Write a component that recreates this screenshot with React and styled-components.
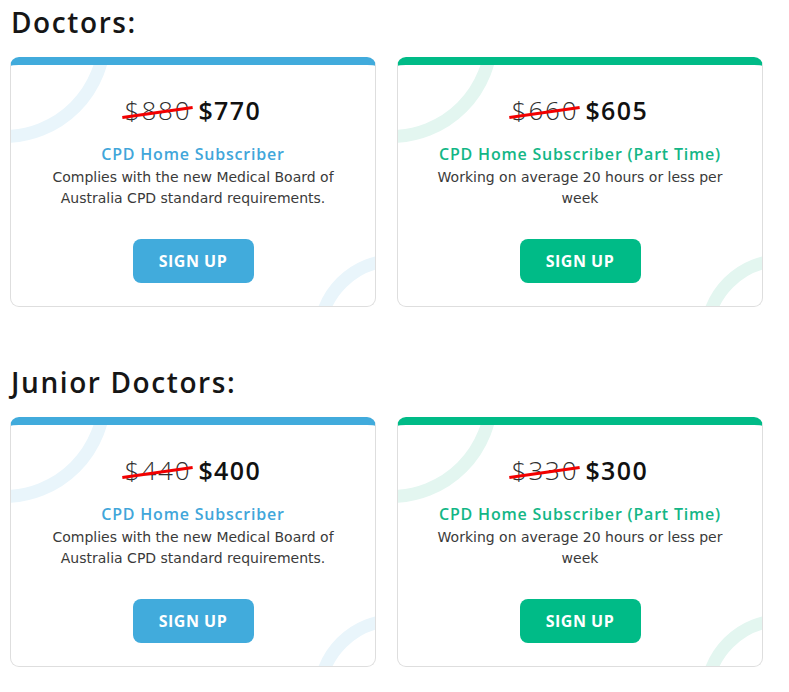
import React from "react";
import styled, { createGlobalStyle } from "styled-components";

const Global = createGlobalStyle`
  html, body { margin: 0; padding: 0; background: #fff; }
  body { font-family: "Open Sans", "DejaVu Sans", sans-serif; color: #333; }
`;

const Page = styled.div`
  padding: 5px 10px 20px 10px;
`;

const Section = styled.section`
  & + & { margin-top: 58px; }
`;

const Heading = styled.h2`
  margin: 0 0 18px 1px;
  font-size: 28px;
  line-height: 34px;
  font-weight: 600;
  letter-spacing: 1.6px;
  color: #161616;
`;

const Grid = styled.div`
  display: grid;
  grid-template-columns: 366px 366px;
  gap: 21px;
`;

const Card = styled.div`
  position: relative;
  overflow: hidden;
  box-sizing: border-box;
  border: 1px solid #dedede;
  border-top: 8px solid ${(p) => p.$accent};
  border-radius: 9px;
  background: #fff;
  padding: 30px 20px 23px;
  display: flex;
  flex-direction: column;
  align-items: center;
  text-align: center;
`;

const RingTop = styled.span`
  position: absolute;
  left: -114px;
  top: -136px;
  width: 214px;
  height: 214px;
  box-sizing: border-box;
  border-radius: 50%;
  border: 13px solid ${(p) => p.$tint};
  pointer-events: none;
`;

const RingBottom = styled.span`
  position: absolute;
  right: -102px;
  bottom: -112px;
  width: 164px;
  height: 164px;
  box-sizing: border-box;
  border-radius: 50%;
  border: 13px solid ${(p) => p.$tint};
  pointer-events: none;
`;

const PriceRow = styled.div`
  position: relative;
  display: flex;
  align-items: baseline;
  gap: 7px;
  line-height: 31px;
`;

const OldPrice = styled.span`
  position: relative;
  font-size: 26px;
  font-weight: 300;
  letter-spacing: 1.8px;
  color: #2e2e2e;
  &::after {
    content: "";
    position: absolute;
    left: -3px;
    right: -1px;
    top: 50%;
    height: 3px;
    background: #f20000;
    transform: rotate(-8deg);
  }
`;

const NewPrice = styled.span`
  font-size: 25px;
  font-weight: 600;
  letter-spacing: 1.4px;
  color: #111;
`;

const Title = styled.div`
  position: relative;
  margin-top: 15px;
  font-size: 16px;
  line-height: 26px;
  font-weight: 600;
  letter-spacing: 0.8px;
  color: ${(p) => p.$accent};
`;

const Desc = styled.p`
  position: relative;
  margin: 0;
  max-width: 300px;
  font-family: "DejaVu Sans", sans-serif;
  font-size: 14px;
  line-height: 21px;
  color: #3a3a3a;
  min-height: 42px;
`;

const Button = styled.button`
  position: relative;
  margin-top: 30px;
  width: 121px;
  height: 44px;
  border: none;
  border-radius: 8px;
  background: ${(p) => p.$accent};
  color: #fff;
  font-family: "Open Sans", sans-serif;
  font-size: 16px;
  font-weight: 700;
  letter-spacing: 0.5px;
  cursor: pointer;
`;

const BLUE = { accent: "#41abdc", title: "#41a6da", tint: "#e9f5fb" };
const GREEN = { accent: "#00bb87", title: "#13b686", tint: "#e3f6f0" };

const sections = [
  {
    heading: "Doctors:",
    plans: [
      { old: "$880", price: "$770", title: "CPD Home Subscriber", desc: "Complies with the new Medical Board of Australia CPD standard requirements.", theme: BLUE },
      { old: "$660", price: "$605", title: "CPD Home Subscriber (Part Time)", desc: "Working on average 20 hours or less per week", theme: GREEN },
    ],
  },
  {
    heading: "Junior Doctors:",
    plans: [
      { old: "$440", price: "$400", title: "CPD Home Subscriber", desc: "Complies with the new Medical Board of Australia CPD standard requirements.", theme: BLUE },
      { old: "$330", price: "$300", title: "CPD Home Subscriber (Part Time)", desc: "Working on average 20 hours or less per week", theme: GREEN },
    ],
  },
];

function PlanCard({ plan }) {
  const t = plan.theme;
  return (
    <Card $accent={t.accent}>
      <RingTop $tint={t.tint} />
      <RingBottom $tint={t.tint} />
      <PriceRow>
        <OldPrice>{plan.old}</OldPrice>
        <NewPrice>{plan.price}</NewPrice>
      </PriceRow>
      <Title $accent={t.title}>{plan.title}</Title>
      <Desc>{plan.desc}</Desc>
      <Button $accent={t.accent}>SIGN UP</Button>
    </Card>
  );
}

export default function App() {
  return (
    <>
      <Global />
      <Page>
        {sections.map((s) => (
          <Section key={s.heading}>
            <Heading>{s.heading}</Heading>
            <Grid>
              {s.plans.map((p) => (
                <PlanCard key={p.old} plan={p} />
              ))}
            </Grid>
          </Section>
        ))}
      </Page>
    </>
  );
}
